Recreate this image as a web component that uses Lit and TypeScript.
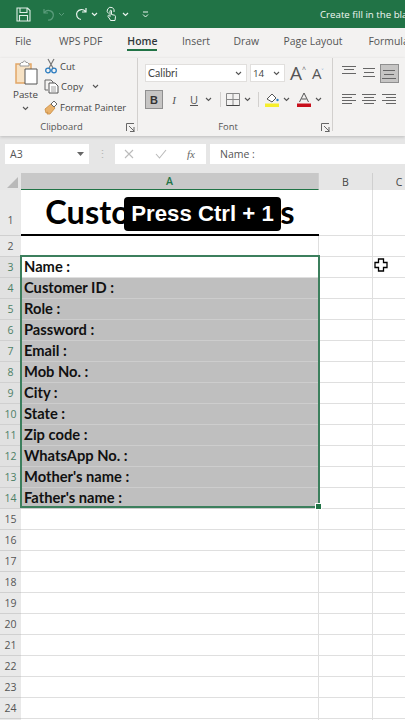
import { LitElement, html, css, svg } from "lit";
import { customElement } from "lit/decorators.js";

const chev = (c = "#555") => html`<svg class="chev" width="7" height="5" viewBox="0 0 7 5"><path d="M1 1l2.5 2.5L6 1" fill="none" stroke=${c} stroke-width="1.1"/></svg>`;
const lines = (ys: [number, number][], al: "c" | "l" | "r" = "c", w = 14) => html`<svg width=${w} height="14" viewBox="0 0 ${w} 14">${ys.map(([y, l]) => {
  const x = al === "c" ? (w - l) / 2 : al === "l" ? 0 : w - l;
  return svg`<path d="M${x} ${y}h${l}" stroke="#666" stroke-width="1"/>`;
})}</svg>`;
const launcher = html`<svg width="9" height="9" viewBox="0 0 9 9"><path d="M.5 8V.5H8M8 8.5V4M8.5 8.5H4M3 3l5 5" fill="none" stroke="#666" stroke-width="1"/></svg>`;

const labels = ["Name :", "Customer ID :", "Role :", "Password :", "Email :", "Mob No. :", "City :", "State :", "Zip code :", "WhatsApp No. :", "Mother's name :", "Father's name :"];
const rowNums = Array.from({ length: 23 }, (_, i) => i + 3);

@customElement("app-root")
export class AppRoot extends LitElement {
  static styles = css`
    :host { display: block; width: 405px; height: 720px; overflow: hidden; background: #fff; font-family: "Open Sans", "Noto Sans", sans-serif; color: #444; position: relative; }
    svg { display: block; flex: none; }
    .title { height: 28px; background: #217346; display: flex; align-items: center; color: #f2f7f4; padding-left: 16px; overflow: hidden; white-space: nowrap; }
    .qat { display: flex; align-items: center; width: 304px; flex: none; }
    .q-save { margin-right: 11px; }
    .q-c1 { margin: 0 8px 0 3px; }
    .q-c2 { margin: 0 7px 0 3px; }
    .q-c3 { margin: 0 13px 0 5px; }
    .doc { font-size: 9.7px; }
    .tabs { height: 30px; background: #f3f2f1; display: flex; font-size: 10.4px; color: #555; white-space: nowrap; overflow: hidden; padding: 5px 0 0 15px; box-sizing: border-box; }
    .tab { height: 16px; line-height: 16px; flex: none; margin-right: 25px; }
    .tab:nth-child(1) { margin-right: 27.5px; }
    .tab.on { color: #30373a; font-weight: 600; border-bottom: 2px solid #217346; margin-right: 24.5px; }
    .tab:nth-child(4) { margin-right: 23.5px; }
    .tab:nth-child(5) { margin-right: 24.5px; }
    .tab:nth-child(6) { margin-right: 26px; }
    .ribbon { height: 78px; background: #f3f2f1; display: grid; grid-template-columns: 138px 195px 1fr; box-shadow: 0 1px 3px rgba(0,0,0,.18); position: relative; }
    .grp { border-right: 1px solid #d2d0ce; margin-bottom: 5px; position: relative; box-sizing: border-box; }
    .grp:last-child { border-right: 0; }
    .grp-label { position: absolute; left: 0; right: 14px; bottom: -2px; text-align: center; font-size: 9.4px; line-height: 12px; color: #555; }
    .launch { position: absolute; right: 2px; bottom: -1px; }
    .clip { display: flex; padding-left: 12px; }
    .paste { width: 27px; display: flex; flex-direction: column; align-items: center; font-size: 9.8px; color: #444; padding-top: 2px; }
    .paste span { margin-top: 3px; line-height: 12px; }
    .paste .chev { margin-top: 5px; }
    .cmds { margin-left: 5px; display: flex; flex-direction: column; gap: 4.5px; font-size: 9.5px; }
    .cmd { display: flex; align-items: center; height: 16px; gap: 2px; white-space: nowrap; color: #444; }
    .cmd .chev { margin-left: 7px; }
    .nudge { margin-left: -1px; }
    .font { padding: 6px 0 0 7px; }
    .frow { display: flex; align-items: center; }
    .frow + .frow { margin-top: 8px; }
    .box { height: 18px; background: #fff; border: 1px solid #e1dfdd; box-sizing: border-box; display: flex; align-items: center; justify-content: space-between; font-size: 9.8px; padding: 0 4px 0 2px; color: #444; }
    .fname { width: 102px; margin-right: 3px; font-family: "Lato", sans-serif; font-size: 10.5px; }
    .fsize { width: 35px; margin-right: 5px; padding-left: 2px; }
    .big { font-size: 19px; line-height: 18px; color: #555; white-space: nowrap; }
    .small { font-size: 15px; line-height: 18px; color: #555; margin-left: 6px; white-space: nowrap; }
    .big sup, .small sup { font-size: 7px; line-height: 0; }
    .big sup { color: #666; vertical-align: 8px; }
    .small sup { color: #3b7fc4; vertical-align: 5px; }
    .btn { width: 18px; height: 19px; display: flex; align-items: center; justify-content: center; flex: none; font-size: 11px; color: #555; font-family: "Liberation Serif", serif; }
    .btn.b { background: #c6c5c4; border: 1px solid #8f8f8f; box-sizing: border-box; color: #333; font-weight: 700; font-family: "Liberation Sans", sans-serif; }
    .i { font-style: italic; margin-left: 2px; }
    .u { text-decoration: underline; font-family: "Open Sans", sans-serif; margin-left: 2px; }
    .sep { width: 1px; height: 15px; background: #d2d0ce; flex: none; }
    .s1 { margin: 0 5px 0 8px; }
    .s2 { margin: 0 6px 0 7px; }
    .m2 { margin-left: 2px; }
    .m3 { margin-left: 3px; }
    .m4 { margin-left: 4px; }
    .a-ic { margin-left: 7px; }
    .align { padding: 5px 0 0 6px; display: grid; grid-template-columns: 20px 20px 20px; grid-auto-rows: 20px; row-gap: 6px; justify-items: center; align-items: center; }
    .align .on { width: 19px; height: 19px; background: #c6c5c4; border: 1px solid #8f8f8f; box-sizing: border-box; display: flex; align-items: center; justify-content: center; }
    .fbar { height: 37px; background: #e6e6e6; display: flex; align-items: flex-start; padding: 8px 0 0 5px; box-sizing: border-box; font-size: 10.5px; color: #555; }
    .fbox { background: #fff; height: 20px; display: flex; align-items: center; box-sizing: border-box; }
    .nm { width: 84px; justify-content: space-between; padding: 0 5px; }
    .dots { width: 26px; height: 20px; display: flex; align-items: center; justify-content: center; color: #b5b5b5; }
    .fx { width: 91px; padding: 0 11px 0 9px; justify-content: space-between; margin-right: 4px; }
    .fx i { font-family: "Liberation Serif", serif; font-size: 11px; color: #666; }
    .val { flex: 1; padding-left: 10px; }
    .sheet { display: grid; width: 425px; grid-template-columns: 21px 298px 54px 52px; grid-template-rows: 17px 46px repeat(24, 21px); position: relative; background: #fff; }
    .ch { background: #e6e6e6; border-right: 1px solid #cfcfcf; display: flex; align-items: center; justify-content: center; font-size: 10.5px; color: #444; box-sizing: border-box; }
    .ch:nth-child(4) { border-right: 0; }
    .ch.on { background: #c8c8c8; color: #217346; border-bottom: 1px solid #217346; font-weight: 600; }
    .ch.corner { background: #e6e6e6; border-right: 0; justify-content: flex-end; align-items: flex-end; padding: 0 3px 2px 0; }
    .rh { background: #e9e9e9; border-bottom: 1px solid #d0d0d0; box-sizing: border-box; font-size: 10.5px; display: flex; align-items: center; justify-content: center; color: #555; }
    .rh.tall { align-items: flex-end; padding-bottom: 8px; }
    .rh.sel { background: #e1e1e1; color: #4d7f65; }
    .c { border-right: 1px solid #dfdfdf; border-bottom: 1px solid #dfdfdf; box-sizing: border-box; }
    .a { font-family: "Lato", "Liberation Sans", sans-serif; font-weight: 700; font-size: 14.7px; color: #111; padding: 0 0 2px 3px; display: flex; align-items: center; white-space: nowrap; line-height: 1; }
    .a.g { background: #bfbfbf; border-bottom-color: #cdcdcd; border-right-color: #bfbfbf; }
    .a.head { border-bottom: 2px solid #000; justify-content: center; padding: 0; font-size: 32.5px; font-weight: 700; color: #000; border-right: 0; }
    .badge { position: absolute; left: 124px; top: 24px; width: 157px; height: 34px; background: #000; border-radius: 4px; color: #fff; font-family: "Liberation Sans", sans-serif; font-weight: 700; font-size: 22.2px; display: flex; align-items: center; justify-content: center; white-space: nowrap; }
    .selbox { position: absolute; left: 20px; top: 82px; width: 300px; height: 253px; border: 2px solid #3c7f5d; box-sizing: border-box; pointer-events: none; }
    .handle { position: absolute; right: -4px; bottom: -4px; width: 5px; height: 5px; background: #217346; border: 1px solid #fff; }
    .cursor { position: absolute; left: 374px; top: 85px; }
  `;

  render() {
    return html`
      <div class="title">
        <div class="qat">
          <svg class="q-save" width="15" height="15" viewBox="0 0 15 15"><path d="M1 1h10.5L14 3.5V14H1zM4 1v4.5h7V1M3.5 14V8.5h8V14" fill="none" stroke="#dfeee6" stroke-width="1.1"/></svg>
          <svg width="13" height="13" viewBox="0 0 13 13"><path d="M2 1v4h4M2.5 4.5A4.800 4.800 0 1 1 6 12" fill="none" stroke="#5a9c7b" stroke-width="1.2"/></svg>
          <svg class="q-c1" width="7" height="5" viewBox="0 0 7 5"><path d="M1 1l2.5 2.5L6 1" fill="none" stroke="#5a9c7b"/></svg>
          <svg width="15" height="14" viewBox="0 0 15 14"><path d="M13 1v4H9M12.5 4.5A5 5 0 1 0 8 12.5" fill="none" stroke="#eaf4ee" stroke-width="1.2"/></svg>
          <svg class="q-c2" width="7" height="5" viewBox="0 0 7 5"><path d="M1 1l2.5 2.5L6 1" fill="none" stroke="#eaf4ee" stroke-width="1.2"/></svg>
          <svg width="12" height="16" viewBox="0 0 12 16"><path d="M3.5 7.5A3.500 3.500 0 1 1 9 6M4.800 13L3 10.500c-.5-1 .6-1.600 1.300-.8l.7.8V5c0-1 1.500-1 1.500 0v3.500l3 .7c.8.2 1 .8 1 1.500L10 14.500H5.500z" fill="none" stroke="#eaf4ee" stroke-width="1"/></svg>
          <svg class="q-c3" width="7" height="5" viewBox="0 0 7 5"><path d="M1 1l2.5 2.5L6 1" fill="none" stroke="#eaf4ee" stroke-width="1.2"/></svg>
          <svg width="7" height="7" viewBox="0 0 7 7"><path d="M1 1h5M1 3.5l2.5 2.5L6 3.5" fill="none" stroke="#eaf4ee" stroke-width="1"/></svg>
        </div>
        <span class="doc">Create fill in the blank</span>
      </div>

      <div class="tabs">
        <span class="tab">File</span>
        <span class="tab">WPS PDF</span>
        <span class="tab on">Home</span>
        <span class="tab">Insert</span>
        <span class="tab">Draw</span>
        <span class="tab">Page Layout</span>
        <span class="tab">Formulas</span>
      </div>

      <div class="ribbon">
        <div class="grp clip">
          <div class="paste">
            <svg width="25" height="26" viewBox="0 0 25 26">
              <path d="M3 4h15v19H3z" fill="#f7e2c4" stroke="#e2a767" stroke-width="1.5"/>
              <path d="M7 4l1.500-1.500h1.500a1.500 1.500 0 0 1 3 0h1.500L16 4v2H7z" fill="#fff" stroke="#999"/>
              <path d="M12 9h12v15H12z" fill="#fff" stroke="#555"/>
            </svg>
            <span>Paste</span>
            ${chev()}
          </div>
          <div class="cmds">
            <div class="cmd">
              <svg width="14" height="16" viewBox="0 0 14 16"><path d="M4 1l5 9M10 1L5 10" stroke="#777" stroke-width="1.2"/><circle cx="4" cy="12.5" r="2.3" fill="none" stroke="#2d7dc0" stroke-width="1.3"/><circle cx="10" cy="12.5" r="2.3" fill="none" stroke="#2d7dc0" stroke-width="1.3"/></svg>
              <span>Cut</span>
            </div>
            <div class="cmd">
              <svg width="15" height="15" viewBox="0 0 15 15"><path d="M1 1h6l2 2v1M4 11H1V1" fill="none" stroke="#666"/><path d="M5 4h6l3 3v7H5z" fill="#fff" stroke="#555"/><path d="M7 8h5M7 10h5M7 12h5" stroke="#888" stroke-width=".8"/></svg>
              <span>Copy</span>
              ${chev()}
            </div>
            <div class="cmd">
              <svg width="15" height="15" viewBox="0 0 15 15"><path d="M1 9l6-5 4 4-5 6H3l1-2-2 1z" fill="#e9b26c" stroke="#c98b3f" stroke-width=".8"/><path d="M7 4l3-3 3 3-3 3z" fill="#fff" stroke="#666"/></svg>
              <span class="nudge">Format Painter</span>
            </div>
          </div>
          <div class="grp-label">Clipboard</div>
          <div class="launch">${launcher}</div>
        </div>

        <div class="grp font">
          <div class="frow">
            <div class="box fname"><span>Calibri</span>${chev()}</div>
            <div class="box fsize"><span>14</span>${chev()}</div>
            <span class="big">A<sup>^</sup></span>
            <span class="small">A<sup>˅</sup></span>
          </div>
          <div class="frow">
            <div class="btn b">B</div>
            <div class="btn i">I</div>
            <div class="btn u">U</div>
            <span class="m2">${chev()}</span>
            <div class="sep s1"></div>
            <svg width="14" height="13" viewBox="0 0 14 13"><path d="M.5.5h13v12H.5zM7 .5v12M.5 6.5h13" fill="none" stroke="#888"/><path d="M.5 12.5h13" stroke="#444"/></svg>
            <span class="m4">${chev()}</span>
            <div class="sep s2"></div>
            <svg width="15" height="15" viewBox="0 0 15 15"><path d="M2 7l5-5 4 4-4 4z" fill="#fff" stroke="#555"/><circle cx="12.5" cy="8" r="1.2" fill="#2d7dc0"/><path d="M0 11.5h14V15H0z" fill="#f6ee2c"/></svg>
            <span class="m3">${chev()}</span>
            <svg class="a-ic" width="14" height="15" viewBox="0 0 14 15"><path d="M2.500 10L7 1l4.500 9M4.500 7h5" fill="none" stroke="#555" stroke-width="1"/><path d="M0 11.500h14V15H0z" fill="#c8101c"/></svg>
            <span class="m4">${chev()}</span>
          </div>
          <div class="grp-label">Font</div>
          <div class="launch">${launcher}</div>
        </div>

        <div class="align">
          <div>${lines([[.5, 14], [3.5, 10], [7.5, 14]])}</div>
          <div>${lines([[2.5, 12], [6.5, 10], [10.5, 12]])}</div>
          <div class="on">${lines([[4.5, 12], [8.5, 10], [12.5, 14]])}</div>
          <div>${lines([[2.5, 14], [5.5, 10], [8.5, 14], [11.5, 10]], "l")}</div>
          <div>${lines([[2.5, 14], [5.5, 10], [8.5, 14], [11.5, 10]])}</div>
          <div>${lines([[2.5, 14], [5.5, 10], [8.5, 14], [11.5, 10]], "r")}</div>
        </div>
      </div>

      <div class="fbar">
        <div class="fbox nm"><span>A3</span><svg width="7" height="4" viewBox="0 0 7 4"><path d="M0 0h7L3.5 4z" fill="#666"/></svg></div>
        <div class="dots">⋮</div>
        <div class="fbox fx">
          <svg width="10" height="10" viewBox="0 0 10 10"><path d="M1 1l8 8M9 1L1 9" stroke="#bbb" stroke-width="1.1"/></svg>
          <svg width="12" height="10" viewBox="0 0 12 10"><path d="M1 5l3.500 4L11 1" fill="none" stroke="#bbb" stroke-width="1.1"/></svg>
          <i>fx</i>
        </div>
        <div class="fbox val">Name :</div>
      </div>

      <div class="sheet">
        <div class="ch corner"><svg width="11" height="11" viewBox="0 0 11 11"><path d="M11 0v11H0z" fill="#b9b9b9"/></svg></div>
        <div class="ch on">A</div>
        <div class="ch">B</div>
        <div class="ch">C</div>

        <div class="rh tall">1</div>
        <div class="c a head">Customer Details</div>
        <div class="c"></div>
        <div class="c"></div>

        <div class="rh">2</div>
        <div class="c"></div>
        <div class="c"></div>
        <div class="c"></div>

        ${rowNums.map((n) => {
          const text = labels[n - 3];
          const sel = n <= 14;
          const grey = n >= 4 && n <= 14;
          return html`
            <div class="rh ${sel ? "sel" : ""}">${n <= 24 ? n : ""}</div>
            <div class="c ${sel ? "a" : ""} ${grey ? "g" : ""}">${text ?? ""}</div>
            <div class="c"></div>
            <div class="c"></div>
          `;
        })}

        <div class="badge">Press Ctrl + 1</div>
        <div class="selbox"><div class="handle"></div></div>
        <svg class="cursor" width="14" height="14" viewBox="0 0 14 14"><path d="M4.500 1h5v3.500H13v5H9.500V13h-5V9.500H1v-5h3.500z" fill="#fff" stroke="#000" stroke-width="1.3"/></svg>
      </div>
    `;
  }
}
